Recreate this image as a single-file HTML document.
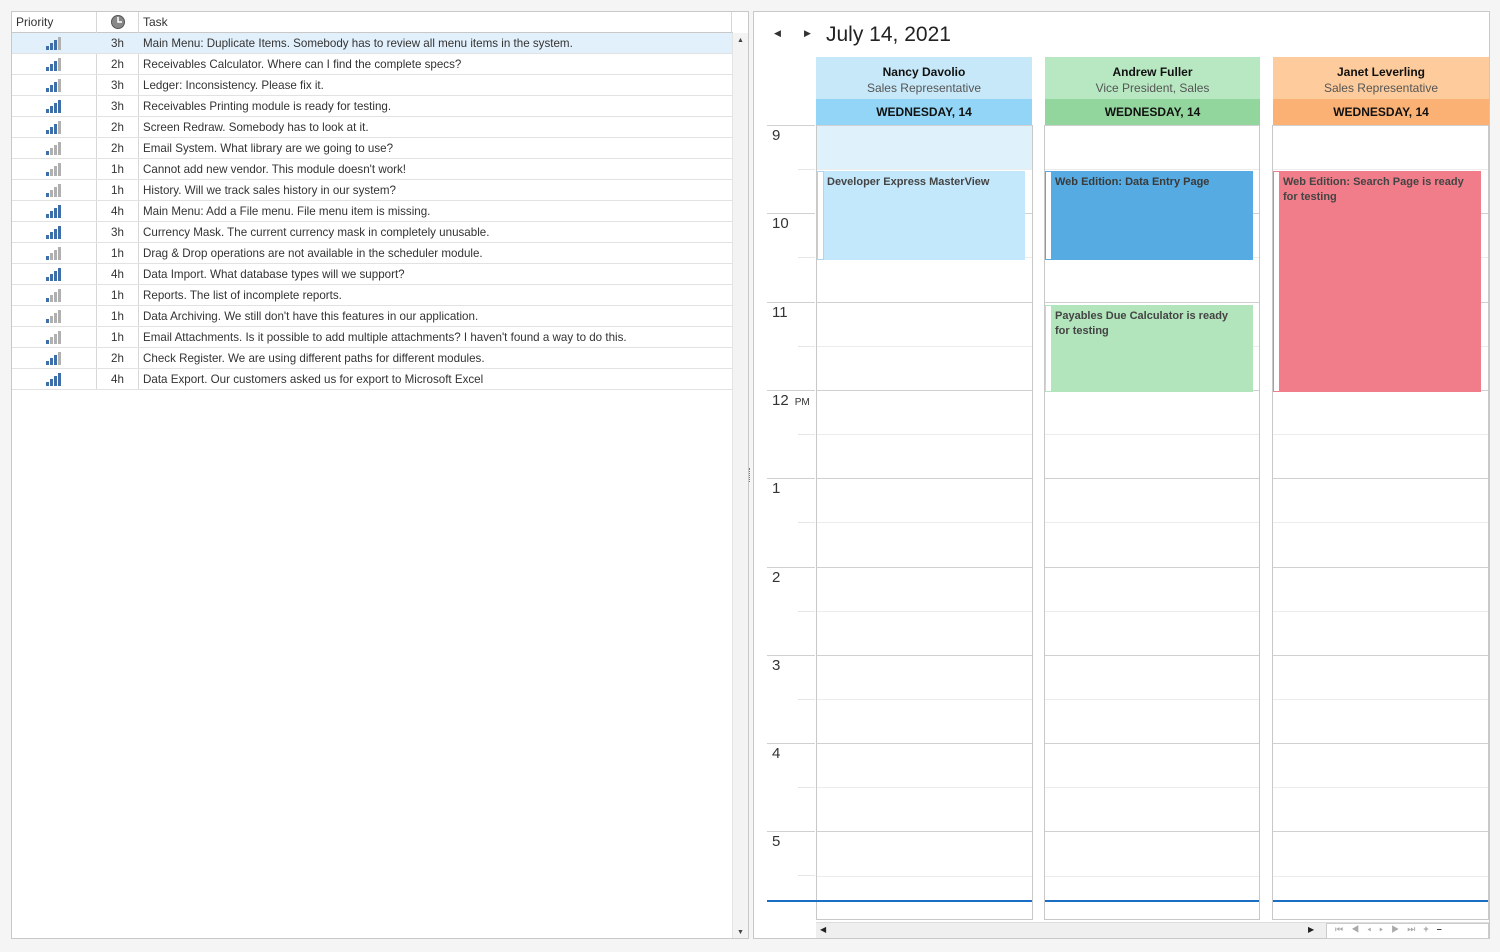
<!DOCTYPE html>
<html><head><style>
*{box-sizing:border-box;margin:0;padding:0}
body{width:1500px;height:952px;background:#f5f5f5;font-family:"Liberation Sans",sans-serif;position:relative;overflow:hidden;color:#222}
.a{position:absolute}
.grid{left:11px;top:11px;width:738px;height:928px;background:#fff;border:1px solid #c8c8c8}
.hdr{left:0;top:0;width:721px;height:21px;border-bottom:1px solid #c8c8c8;font-size:12px;color:#333}
.row{position:absolute;left:0;width:720px;height:21px;border-bottom:1px solid #e2e2e2;font-size:11.6px;color:#333}
.row span{position:absolute;top:4px}
.bars{position:absolute;left:34px;top:4px;width:14px;height:13px}
.bars i{position:absolute;bottom:0;width:3px}
.vl{position:absolute;top:0;width:1px;background:#d8d8d8}
.sch{left:753px;top:11px;width:737px;height:928px;background:#fff;border:1px solid #c8c8c8}
.col{position:absolute;top:113px;height:795px;border:1px solid #c8c8c8;background:#fff}
.hl{position:absolute;left:0;right:0;height:1px;background:#d0d0d0}
.hh{position:absolute;left:0;right:0;height:1px;background:#ececec}
.rh{position:absolute;top:45px;height:42px;text-align:center;font-size:12px;padding-top:7px;line-height:16px}
.rh b{color:#111}
.rh div{color:#555}
.dh{position:absolute;top:87px;height:26px;text-align:center;font-size:12px;font-weight:bold;padding-top:6px;color:#111}
.ap{position:absolute;font-size:11px;font-weight:bold;color:#444;padding:4px 4px 0 10px;line-height:15px}
.ap s{position:absolute;left:0;top:0;bottom:0;width:7px;background:#fff;border:1px solid}
.hr{position:absolute;left:18px;font-size:15px;color:#333}
</style></head><body>
<div class="a grid">
 <div class="a hdr"><span class="a" style="left:4px;top:3px">Priority</span>
 <svg class="a" style="left:98px;top:2px" width="16" height="16"><circle cx="8" cy="8" r="6.5" fill="#888" stroke="#555"/><path d="M8 3v5h4" stroke="#fff" stroke-width="1.5" fill="none"/></svg>
 <span class="a" style="left:131px;top:3px">Task</span></div>
 <div class="vl" style="left:84px;height:377px"></div><div class="vl" style="left:126px;height:377px"></div><div class="vl" style="left:719px;height:21px"></div>
 <div id="rows"></div>
 <div class="a" style="left:720px;top:21px;width:16px;height:905px;background:#f3f3f3;border-left:1px solid #e4e4e4"><div class="a" style="left:4px;top:4px;font-size:7px;color:#444">▲</div><div class="a" style="left:4px;bottom:2px;font-size:7px;color:#444">▼</div></div>
</div>
<div class="a" style="left:749px;top:468px;width:3px;height:14px;border-left:1px dotted #777"></div>
<div class="a sch">
 <div class="a" style="left:20px;top:16px;font-size:9px;color:#333">◀</div>
 <div class="a" style="left:50px;top:16px;font-size:9px;color:#333">▶</div>
 <div class="a" style="left:72px;top:11px;font-size:21px;color:#222">July 14, 2021</div>
 <div class="rh" style="left:62px;width:216px;background:#c7e8f9"><b>Nancy Davolio</b><div>Sales Representative</div></div>
 <div class="dh" style="left:62px;width:216px;background:#92d5f6">WEDNESDAY, 14</div>
 <div class="rh" style="left:291px;width:215px;background:#b8e8c2"><b>Andrew Fuller</b><div>Vice President, Sales</div></div>
 <div class="dh" style="left:291px;width:215px;background:#93d69d">WEDNESDAY, 14</div>
 <div class="rh" style="left:519px;width:216px;background:#fecc9c"><b>Janet Leverling</b><div>Sales Representative</div></div>
 <div class="dh" style="left:519px;width:216px;background:#fbb173">WEDNESDAY, 14</div>
 <div id="times"></div>
 <div class="col" style="left:62px;width:217px" id="c1"><div class="a" style="left:0;right:0;top:0;height:44px;background:#dff1fb"></div></div>
 <div class="col" style="left:290px;width:216px" id="c2"></div>
 <div class="col" style="left:518px;width:217px" id="c3"></div>
 <div class="a" style="left:13px;top:888px;width:265px;height:2px;background:#1a6fc4"></div>
 <div class="a" style="left:291px;top:888px;width:214px;height:2px;background:#1a6fc4"></div>
 <div class="a" style="left:519px;top:888px;width:215px;height:2px;background:#1a6fc4"></div>
 <div class="ap" style="left:63px;top:159px;width:208px;height:89px;background:#c4e8fb"><s style="border-color:#a8d8f2"></s>Developer Express MasterView</div>
 <div class="ap" style="left:291px;top:159px;width:208px;height:89px;background:#56abe2;color:#3a3a3a"><s style="border-color:#56abe2"></s>Web Edition: Data Entry Page</div>
 <div class="ap" style="left:291px;top:293px;width:208px;height:87px;background:#b2e5bc"><s style="border-color:#b2e5bc"></s>Payables Due Calculator is ready<br>for testing</div>
 <div class="ap" style="left:519px;top:159px;width:208px;height:221px;background:#f07d89"><s style="border-color:#f07d89"></s>Web Edition: Search Page is ready<br>for testing</div>
 <div class="a" style="left:62px;top:910px;width:673px;height:16px;background:#efefef;border-top:1px solid #ddd"><span class="a" style="left:4px;top:2px;font-size:8px">◀</span><span class="a" style="left:492px;top:2px;font-size:8px">▶</span>
 <div class="a" style="left:510px;top:0;width:163px;height:16px;background:#fff;border:1px solid #ccc;font-size:9px;color:#aaa;letter-spacing:8px;padding-left:8px">⏮◀◂▸▶⏭<b style="color:#999">+</b><b style="color:#333">–</b></div></div>
</div>
<script>
var d=[[3,"3h","Main Menu: Duplicate Items. Somebody has to review all menu items in the system."],[3,"2h","Receivables Calculator. Where can I find the complete specs?"],[3,"3h","Ledger: Inconsistency. Please fix it."],[4,"3h","Receivables Printing module is ready for testing."],[3,"2h","Screen Redraw. Somebody has to look at it."],[1,"2h","Email System. What library are we going to use?"],[1,"1h","Cannot add new vendor. This module doesn't work!"],[1,"1h","History. Will we track sales history in our system?"],[4,"4h","Main Menu: Add a File menu. File menu item is missing."],[4,"3h","Currency Mask. The current currency mask in completely unusable."],[1,"1h","Drag & Drop operations are not available in the scheduler module."],[4,"4h","Data Import. What database types will we support?"],[1,"1h","Reports. The list of incomplete reports."],[1,"1h","Data Archiving. We still don't have this features in our application."],[1,"1h","Email Attachments. Is it possible to add multiple attachments? I haven't found a way to do this."],[3,"2h","Check Register. We are using different paths for different modules."],[4,"4h","Data Export. Our customers asked us for export to Microsoft Excel"]];
var h="";d.forEach(function(r,i){var b="";for(var k=0;k<4;k++)b+='<i style="left:'+(k*4)+'px;height:'+(4+k*3)+'px;background:'+(k<r[0]?'#3f6fa8':'#b0b0b0')+'"></i>';
h+='<div class="row" style="top:'+(21+i*21)+'px;'+(i==0?'background:#e2f0fb':'')+'"><div class="bars">'+b+'</div><span style="left:99px">'+r[1]+'</span><span style="left:131px">'+r[2]+'</span></div>';});
document.getElementById("rows").innerHTML=h;
var t="",L=["9","10","11","12","1","2","3","4","5"];
for(var i=0;i<9;i++){var y=113+i*88.3;t+='<div class="a" style="left:13px;top:'+y+'px;width:48px;height:1px;background:#d0d0d0"></div><div class="a" style="left:44px;top:'+(y+44)+'px;width:17px;height:1px;background:#e6e6e6"></div><div class="hr" style="top:'+(y+2)+'px">'+L[i]+(i==3?'<span style="font-size:10px;margin-left:6px">PM</span>':'')+'</div>';}
document.getElementById("times").innerHTML=t;
["c1","c2","c3"].forEach(function(c){var e=document.getElementById(c),s="";for(var i=0;i<18;i++){s+='<div class="'+(i%2?'hh':'hl')+'" style="top:'+(i*44.15-1)+'px"></div>';}e.innerHTML+=s;});
</script>
</body></html>
